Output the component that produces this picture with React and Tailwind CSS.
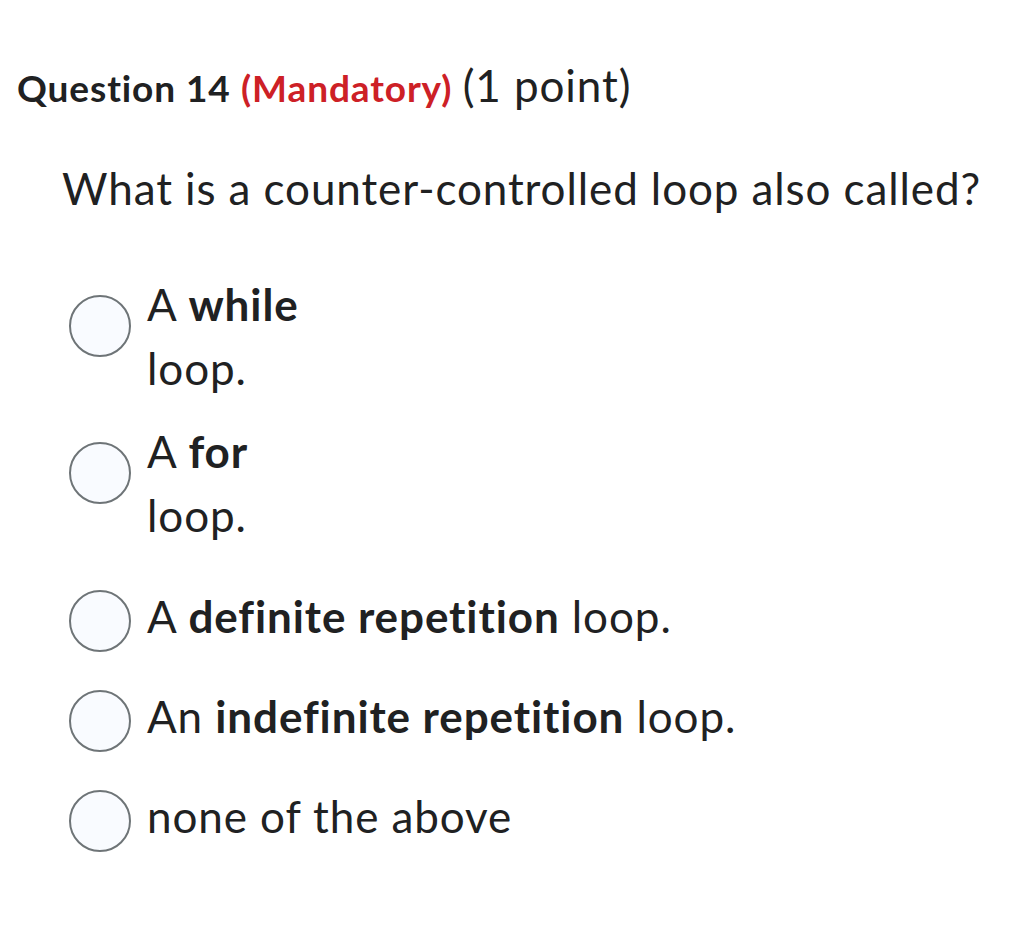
const OPTIONS = [
  { id: 'a', lines: [['A ', 'while'], ['loop.']], radioTop: 'mt-[23px]', gap: 'mb-[19px]' },
  { id: 'b', lines: [['A ', 'for'], ['loop.']], radioTop: 'mt-[23px]', gap: 'mb-[37px]' },
  { id: 'c', lines: [['A ', 'definite repetition', ' loop.']], radioTop: 'mt-[6px]', gap: 'mb-[32px]' },
  { id: 'd', lines: [['An ', 'indefinite repetition', ' loop.']], radioTop: 'mt-[6px]', gap: 'mb-[32px]' },
  { id: 'e', lines: [['none of the above']], radioTop: 'mt-[6px]', gap: 'mb-0' }
];

const Radio = ({ className }) => (
  <span
    className={`block h-[62px] w-[62px] shrink-0 rounded-full border-2 border-[#6e7477] bg-[#f9fbff] ${className}`}
  />
);

const App = () => {
  return (
    <div
      className="min-h-[937px] w-[1013px] bg-white tracking-[0.9px] text-[#202122] [font-variant-ligatures:none]"
      style={{ fontFamily: 'Lato, "Noto Sans", sans-serif' }}
    >
      <div className="pl-[17px] pt-[61px] text-[37px] leading-[48px]">
        <span className="font-bold">Question 14</span>{' '}
        <span className="font-bold text-[#cd2026]">(Mandatory)</span>{' '}
        <span className="text-[44px] leading-[48px]">(1 point)</span>
      </div>

      <p className="mt-[44px] pl-[62px] text-[44px] leading-[64px]">
        What is a counter-controlled loop also called?
      </p>

      <div className="mt-[52px] flex flex-col pl-[69px]">
        {OPTIONS.map((option) => (
          <label key={option.id} className={`flex items-start gap-[16px] ${option.gap}`}>
            <Radio className={option.radioTop} />
            <span className="text-[44px] leading-[64px]">
              {option.lines.map((line, i) => (
                <span key={i} className="block">
                  {line.map((part, j) =>
                    j === 1 ? (
                      <strong key={j} className="font-bold">
                        {part}
                      </strong>
                    ) : (
                      <span key={j}>{part}</span>
                    )
                  )}
                </span>
              ))}
            </span>
          </label>
        ))}
      </div>
    </div>
  );
};

export default App;
